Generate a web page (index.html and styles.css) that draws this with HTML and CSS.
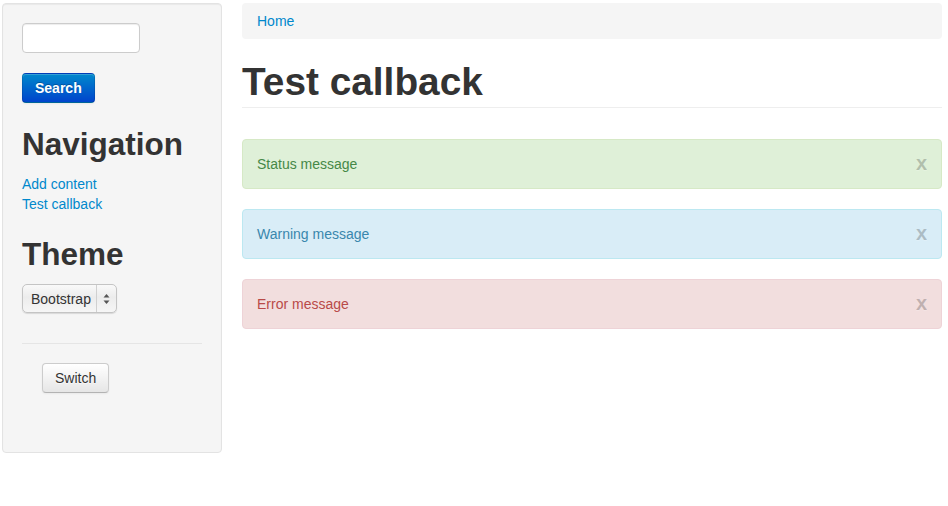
FILE: index.html
```html
<!DOCTYPE html>
<html lang="en">
<head>
<meta charset="utf-8">
<title>Test callback</title>
<link rel="stylesheet" href="styles.css">
</head>
<body>
<div class="page">
  <aside class="sidebar">
    <form class="search-form">
      <input type="text" class="search-input" aria-label="Search">
      <button type="button" class="btn btn-primary">Search</button>
    </form>
    <div class="block">
      <h2 class="block-title">Navigation</h2>
      <ul class="nav-links">
        <li><a href="#">Add content</a></li>
        <li><a href="#">Test callback</a></li>
      </ul>
    </div>
    <div class="block">
      <h2 class="block-title">Theme</h2>
      <form class="theme-form">
        <div class="select-wrap">
          <select class="theme-select" aria-label="Theme">
            <option>Bootstrap</option>
          </select>
          <span class="select-arrows">
            <svg width="7" height="12" viewBox="0 0 7 12"><polygon points="0.5,4.5 3.5,1 6.5,4.5" fill="#555"/><polygon points="0.5,7.5 3.5,11 6.5,7.5" fill="#555"/></svg>
          </span>
        </div>
        <div class="form-actions">
          <button type="button" class="btn">Switch</button>
        </div>
      </form>
    </div>
  </aside>
  <main class="content">
    <ul class="breadcrumb">
      <li><a href="#">Home</a></li>
    </ul>
    <h1 class="page-title">Test callback</h1>
    <div class="alert alert-success"><button type="button" class="close">x</button>Status message</div>
    <div class="alert alert-info"><button type="button" class="close">x</button>Warning message</div>
    <div class="alert alert-error"><button type="button" class="close">x</button>Error message</div>
  </main>
</div>
</body>
</html>
```
FILE: styles.css
```css
html, body {
  margin: 0;
  padding: 0;
  background: #fff;
}
body {
  font-family: "Liberation Sans", Arial, Helvetica, sans-serif;
  font-size: 14px;
  line-height: 20px;
  color: #333;
}
a {
  color: #0088cc;
  text-decoration: none;
}
.page {
  display: flex;
  align-items: flex-start;
  gap: 20px;
  padding: 3px 0 0 2px;
}
.sidebar {
  box-sizing: border-box;
  width: 220px;
  min-height: 450px;
  padding: 19px;
  background: #f5f5f5;
  border: 1px solid #e3e3e3;
  border-radius: 4px;
  box-shadow: inset 0 1px 1px rgba(0,0,0,0.05);
}
.search-form {
  display: flex;
  flex-direction: column;
  align-items: flex-start;
  gap: 20px;
  margin: 0;
  padding-bottom: 1px;
}
.search-input {
  box-sizing: border-box;
  width: 118px;
  height: 30px;
  padding: 4px 6px;
  margin: 0;
  border: 1px solid #ccc;
  border-radius: 4px;
  background: #fff;
  box-shadow: inset 0 1px 1px rgba(0,0,0,0.075);
  font: inherit;
}
.btn {
  display: inline-block;
  box-sizing: border-box;
  height: 30px;
  padding: 4px 12px;
  margin: 0;
  font-family: inherit;
  font-size: 14px;
  line-height: 20px;
  color: #333;
  text-shadow: 0 1px 1px rgba(255,255,255,0.75);
  background: linear-gradient(to bottom, #ffffff, #e6e6e6);
  border: 1px solid #cccccc;
  border-bottom-color: #b3b3b3;
  border-radius: 4px;
  box-shadow: inset 0 1px 0 rgba(255,255,255,0.2), 0 1px 2px rgba(0,0,0,0.05);
  cursor: pointer;
}
.btn-primary {
  color: #fff;
  font-weight: bold;
  text-shadow: 0 -1px 0 rgba(0,0,0,0.25);
  background: linear-gradient(to bottom, #0088cc, #0044cc);
  border-color: rgba(0,0,0,0.1) rgba(0,0,0,0.1) rgba(0,0,0,0.25);
}
.block-title {
  margin: 20px 0 10px;
  font-size: 31.5px;
  line-height: 40px;
  font-weight: bold;
  color: #333;
}
.nav-links {
  list-style: none;
  margin: 0;
  padding: 0;
}
.theme-form {
  margin: 0;
}
.select-wrap {
  position: relative;
  width: 95px;
  height: 29px;
  margin-bottom: 10px;
}
.theme-select {
  -webkit-appearance: none;
  appearance: none;
  box-sizing: border-box;
  width: 95px;
  height: 29px;
  margin: 0;
  padding: 0 22px 0 8px;
  font-family: inherit;
  font-size: 14px;
  color: #333;
  border: 1px solid #c4c4c4;
  border-radius: 5px;
  background: linear-gradient(to bottom, #f9f9f9 0%, #ececec 45%, #f6f6f6 100%);
  box-shadow: 0 1px 1px rgba(0,0,0,0.12);
}
.select-arrows {
  position: absolute;
  top: 1px;
  right: 1px;
  bottom: 1px;
  width: 19px;
  border-left: 1px solid #d0d0d0;
  display: flex;
  align-items: center;
  justify-content: center;
  pointer-events: none;
}
.form-actions {
  margin-top: 30px;
  padding: 19px 20px 20px;
  border-top: 1px solid #e5e5e5;
}
.content {
  width: 700px;
}
.breadcrumb {
  list-style: none;
  margin: 0 0 23px;
  padding: 8px 15px;
  background: #f5f5f5;
  border-radius: 4px;
}
.page-title {
  margin: 0 0 31px;
  padding-bottom: 5px;
  font-size: 38.8px;
  line-height: 40px;
  font-weight: bold;
  color: #333;
  border-bottom: 1px solid #eeeeee;
}
.alert {
  padding: 14px 35px 14px 14px;
  margin-bottom: 20px;
  border: 1px solid;
  border-radius: 4px;
}
.alert-success {
  background: #dff0d8;
  border-color: #d6e9c6;
  color: #468847;
}
.alert-info {
  background: #d9edf7;
  border-color: #bce8f1;
  color: #3a87ad;
}
.alert-error {
  background: #f2dede;
  border-color: #eed3d7;
  color: #b94a48;
}
.close {
  float: right;
  position: relative;
  top: -1px;
  right: -21px;
  padding: 0;
  margin: 0;
  background: none;
  border: 0;
  font-family: inherit;
  font-size: 20px;
  font-weight: bold;
  line-height: 20px;
  color: #000;
  opacity: 0.2;
  text-shadow: 0 1px 0 #fff;
  cursor: pointer;
}
```
